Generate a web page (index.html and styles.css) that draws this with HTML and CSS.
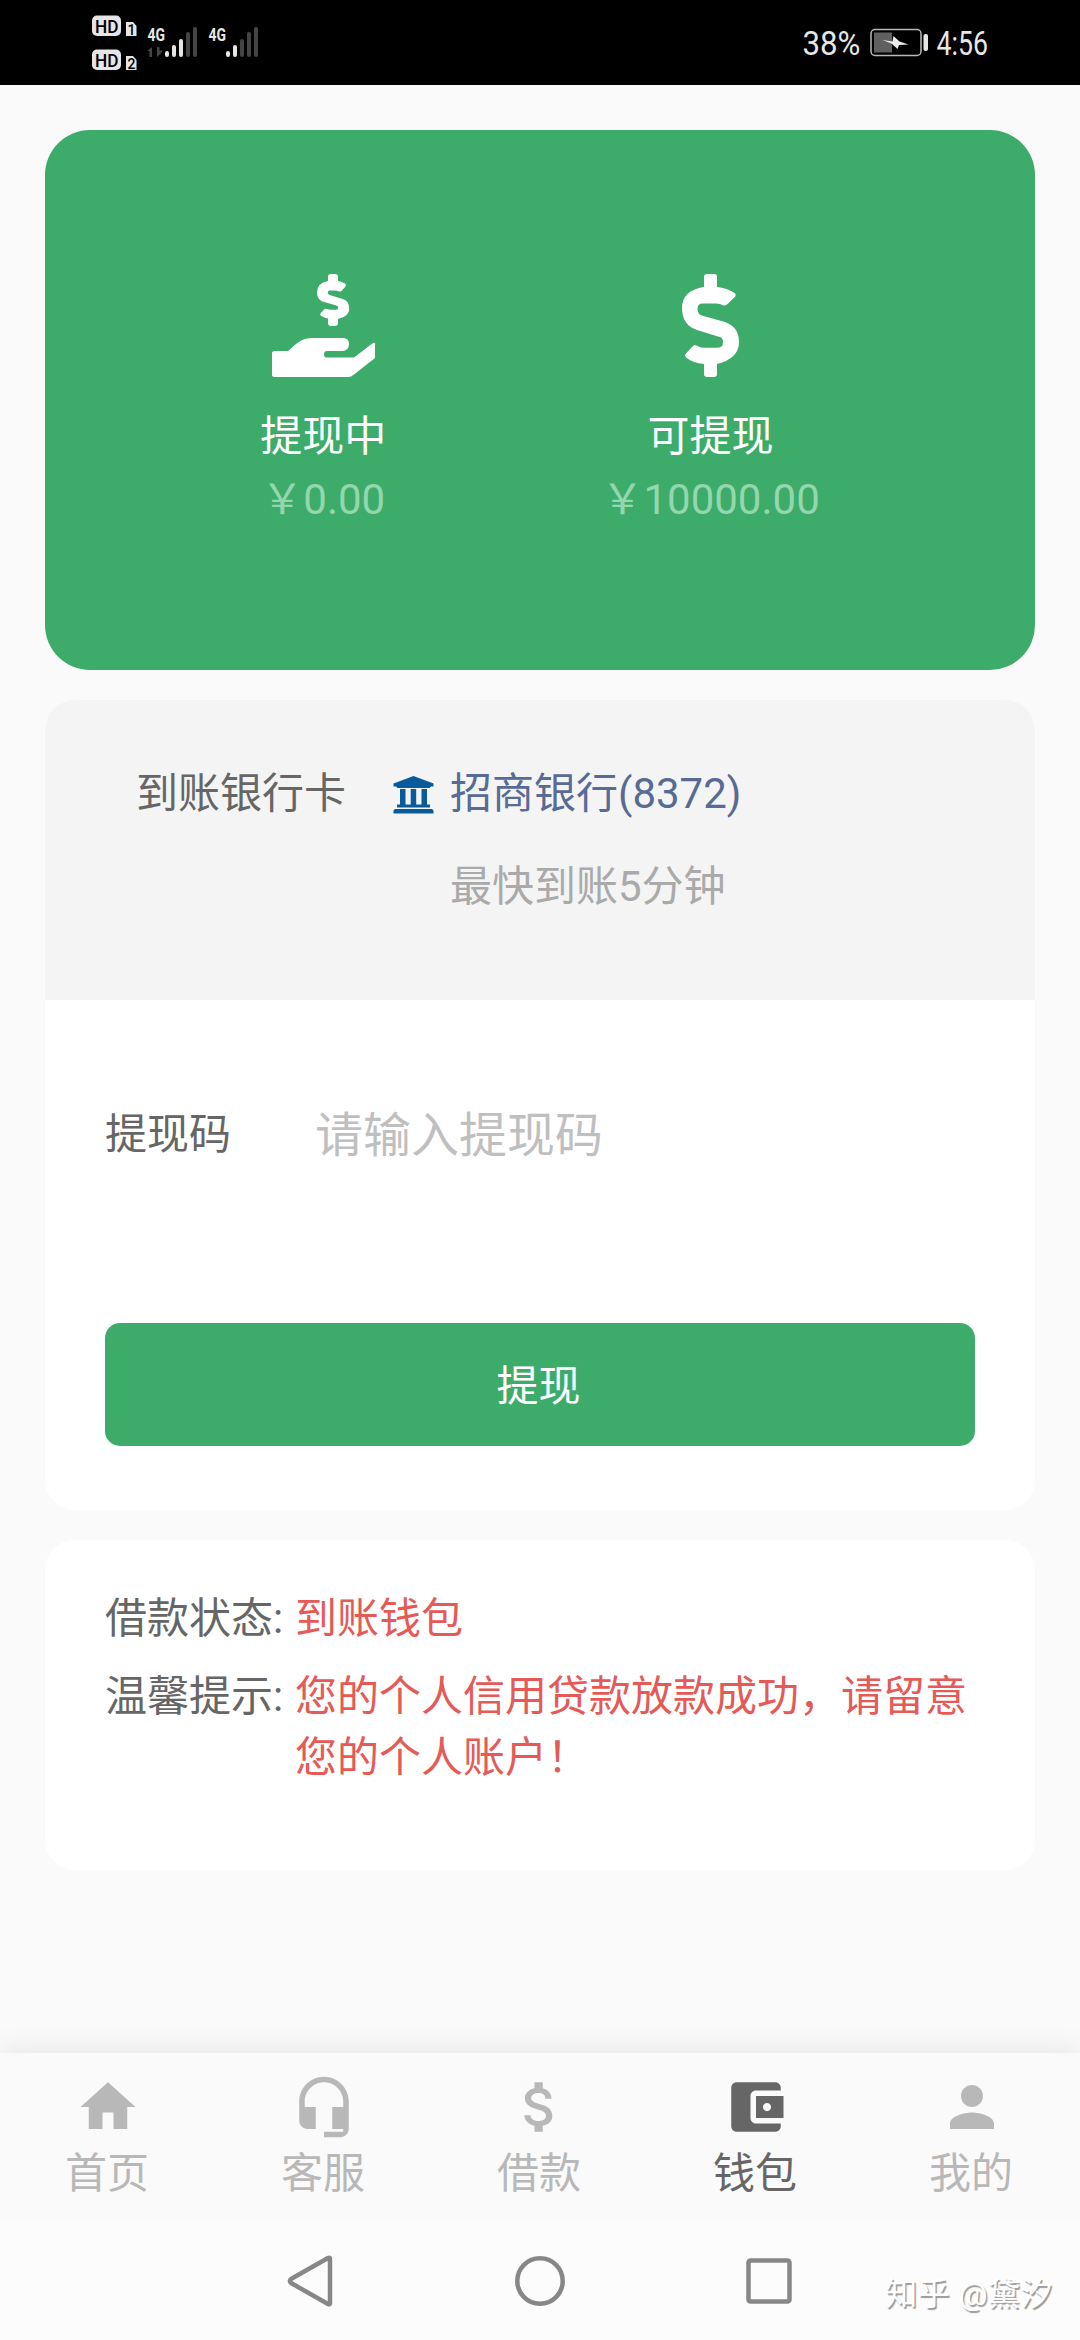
FILE: index.html
```html
<!DOCTYPE html>
<html lang="zh-CN">
<head>
<meta charset="utf-8">
<title>钱包</title>
<link rel="stylesheet" href="styles.css">
</head>
<body>
<header class="status">
  <svg class="status-left" width="180" height="85" viewBox="80 0 180 85">
    <g fill="#e6e6e6">
      <rect x="92" y="15.500" width="29" height="20.500" rx="5"/>
      <rect x="92" y="49.500" width="29" height="20.500" rx="5"/>
      <path d="M126 22h7l3.500 4v10H126zM126 56h7l3.500 4v10H126z"/>
    </g>
    <g class="badge-text">
      <text x="95" y="32.500" font-size="19" textLength="23.500" lengthAdjust="spacingAndGlyphs">HD</text>
      <text x="95" y="66.500" font-size="19" textLength="23.500" lengthAdjust="spacingAndGlyphs">HD</text>
      <text x="127.500" y="34.500" font-size="14" textLength="7">1</text>
      <text x="127.500" y="68.500" font-size="14" textLength="7">2</text>
    </g>
    <g class="net-text">
      <text x="147.500" y="40.500" font-size="19" textLength="17.500" lengthAdjust="spacingAndGlyphs">4G</text>
      <text x="208.500" y="40.500" font-size="19" textLength="17.500" lengthAdjust="spacingAndGlyphs">4G</text>
    </g>
    <g stroke-width="4" stroke-linecap="round">
      <g stroke="#e6e6e6"><path d="M167 53v2M174 47v8M181 41v14M228 53v2M235 47v8"/></g>
      <g stroke="#444"><path d="M188 34v21M195 29v26M242 41v14M249 34v21M256 29v26"/></g>
    </g>
    <path d="M152 47v10h-2.500v-6H147zM157 47v10l5-5v-2l-2.500 1v-4z" fill="#444"/>
  </svg>
  <svg class="status-right" width="240" height="85" viewBox="800 0 240 85">
    <text class="clock" x="802.500" y="55" font-size="34" textLength="58" lengthAdjust="spacingAndGlyphs">38%</text>
    <rect x="871" y="29.500" width="50" height="26" rx="4" fill="none" stroke="#b9b9b9" stroke-width="1.500"/>
    <rect x="874" y="32.500" width="18" height="20" fill="#606060"/>
    <rect x="923.500" y="34" width="4.500" height="17" rx="2" fill="#e6e6e6"/>
    <path d="M882.500 40l10 1.500 1-5.500 6 5.500 9 3-9.500.5-1.500 4-6-5.500z" fill="#eee"/>
    <text class="clock" x="936.500" y="55" font-size="34" textLength="51.500" lengthAdjust="spacingAndGlyphs">4:56</text>
  </svg>
</header>

<main class="page">
  <section class="hero">
    <div class="stat">
      <svg class="stat-icon" viewBox="0 0 103 103" fill="currentColor">
        <path d="M56 2.500Q56 0 59 0h4q3 0 3 2.500V7q4 .6 7 2.600 1.500 1 .7 2.600l-4 4.500q-1.200 1.300-3 .6-1.600-.8-4-.8h-5q-2 0-2 2.200 0 1.500 2 2.200l13 4Q77.300 26.500 77.300 35q0 7.500-11.300 10V49q0 3-3 3h-4q-3 0-3-3v-4.500q-4-.6-7-2.800-1.500-1-.5-2.500l3.500-3.700q1.300-1.200 3-.4 1.500.6 4 .6h5q2.200 0 2.200-2 0-1.700-2-2.300l-11-3.200Q45 27 45 18.500 45 9 56 7z"/>
        <path d="M2.500 77H16L24 70Q31 64 39 64H71Q77 64 77 70T71 77H55Q52 77 52 80.300T55 83.500H82L99 70.500Q103 67.500 103 70V84L82 100.500Q79 103 76 103H2.500Q0 103 0 100.500V79.500Q0 77 2.500 77z"/>
      </svg>
      <span class="stat-label">提现中</span>
      <span class="stat-amount">￥0.00</span>
    </div>
    <div class="stat">
      <svg class="stat-icon" viewBox="0 0 103 103" fill="currentColor">
        <path d="M45 3q0-3 3-3h7q3 0 3 3V13q10 1 17.500 6 2 1.500.6 3.800L68 30.500q-2 1.800-4 .7-3-1.700-7-1.700H43.500Q38.500 29.500 38.500 35t5 6.800L66 48Q80 53 80 68 80 84.500 58 90v10q0 3-3 3h-7q-3 0-3-3V90Q34 89 27 83.500q-1.800-1.500-.5-3.400l7.500-8.200q1.700-1.700 4-.2 3 2.100 6.500 2.100H58Q64 73.800 64 68.300T59 62.500L38 56Q23 51 23 34 23 16.500 45 13z"/>
      </svg>
      <span class="stat-label">可提现</span>
      <span class="stat-amount">￥10000.00</span>
    </div>
  </section>

  <section class="card withdraw">
    <div class="bank">
      <span class="bank-label">到账银行卡</span>
      <svg class="bank-icon" viewBox="0 0 41 38" fill="currentColor">
        <path d="M20.500 0L40.500 7.500v3H38L36.500 12h-32L3 10.500H.5v-3zM7 13h5.500v16H7zM17.700 13h5.500v16h-5.500zM28.500 13H34v16h-5.500zM4 28.500h33v3H4zM2 33h37l1.500 1.500V37.500H.5V34.500z"/>
      </svg>
      <div class="bank-info">
        <span class="bank-name">招商银行(8372)</span>
        <span class="bank-hint">最快到账5分钟</span>
      </div>
    </div>
    <div class="code-row">
      <label class="code-label" for="code">提现码</label>
      <input class="code-input" id="code" type="text" placeholder="请输入提现码">
    </div>
    <button class="submit" type="button">提现</button>
  </section>

  <section class="card notice">
    <div class="notice-row">
      <span class="notice-key">借款状态:</span>
      <span class="notice-value">到账钱包</span>
    </div>
    <div class="notice-row">
      <span class="notice-key">温馨提示:</span>
      <span class="notice-value">您的个人信用贷款放款成功，请留意您的个人账户！</span>
    </div>
  </section>
</main>

<nav class="tabs">
  <a class="tab">
    <svg class="tab-icon" viewBox="0 0 24 24"><path d="M10 20v-6h4v6h5v-8h3L12 3 2 12h3v8z"/></svg>
    <span>首页</span>
  </a>
  <a class="tab">
    <svg class="tab-icon" viewBox="0 0 24 24"><path d="M12 1c-4.970 0-9 4.030-9 9v7c0 1.660 1.340 3 3 3h3v-8H5v-2c0-3.870 3.130-7 7-7s7 3.130 7 7v2h-4v8h4v1h-7v2h6c1.660 0 3-1.340 3-3V10c0-4.970-4.030-9-9-9z"/></svg>
    <span>客服</span>
  </a>
  <a class="tab">
    <svg class="tab-icon" viewBox="0 0 24 24"><path d="M11.800 10.900c-2.270-.59-3-1.200-3-2.150 0-1.090 1.010-1.850 2.700-1.850 1.780 0 2.440.85 2.500 2.100h2.210c-.07-1.720-1.120-3.300-3.210-3.810V3h-3v2.160c-1.940.42-3.500 1.680-3.500 3.610 0 2.310 1.910 3.460 4.700 4.130 2.500.6 3 1.480 3 2.410 0 .69-.49 1.790-2.700 1.790-2.060 0-2.870-.92-2.980-2.100h-2.200c.12 2.190 1.760 3.420 3.680 3.830V21h3v-2.150c1.950-.37 3.500-1.500 3.500-3.550 0-2.840-2.430-3.810-4.700-4.400z"/></svg>
    <span>借款</span>
  </a>
  <a class="tab tab-active">
    <svg class="tab-icon" viewBox="0 0 24 24"><path d="M21 18v1c0 1.100-.9 2-2 2H5c-1.110 0-2-.9-2-2V5c0-1.100.89-2 2-2h14c1.100 0 2 .9 2 2v1h-9c-1.110 0-2 .9-2 2v8c0 1.100.89 2 2 2h9zm-9-2h10V8H12v8zm4-2.500c-.83 0-1.500-.67-1.500-1.500s.67-1.500 1.500-1.500 1.500.67 1.500 1.500-.67 1.500-1.500 1.500z"/></svg>
    <span>钱包</span>
  </a>
  <a class="tab">
    <svg class="tab-icon" viewBox="0 0 24 24"><path d="M12 12c2.210 0 4-1.790 4-4s-1.790-4-4-4-4 1.790-4 4 1.790 4 4 4zm0 2c-2.670 0-8 1.340-8 4v2h16v-2c0-2.660-5.330-4-8-4z"/></svg>
    <span>我的</span>
  </a>
</nav>

<footer class="system">
  <svg class="system-icon" viewBox="0 0 60 60"><path d="M49 8v44q0 2-2 1L10 32q-2-2 0-4L47 7q2-1 2 1z"/></svg>
  <svg class="system-icon" viewBox="0 0 60 60"><circle cx="30" cy="30" r="22.700"/></svg>
  <svg class="system-icon" viewBox="0 0 60 60"><rect x="9.500" y="9.500" width="41" height="41" rx="2"/></svg>
  <span class="watermark">知乎 @黛汐</span>
</footer>
</body>
</html>
```

FILE: styles.css
```css
* {
  box-sizing: border-box;
}

body {
  margin: 0;
  width: 1080px;
  height: 2340px;
  display: flex;
  flex-direction: column;
  overflow: hidden;
  background: #fafafa;
  color: #666;
  font-family: Roboto, "Noto Sans CJK SC", sans-serif;
  font-size: 42px;
  line-height: 60px;
}

svg {
  display: block;
  flex: none;
}

/* Status bar */
.status {
  flex: none;
  height: 85px;
  display: flex;
  justify-content: space-between;
  padding: 0 40px 0 80px;
  background: #000;
}

.badge-text {
  fill: #000;
  font-weight: 500;
}

.net-text {
  fill: #e6e6e6;
  font-weight: 700;
}

.clock {
  fill: #e6e6e6;
}

/* Content */
.page {
  flex: 1;
  display: flex;
  flex-direction: column;
  padding: 45px 45px 0;
}

.hero {
  height: 540px;
  display: flex;
  justify-content: space-evenly;
  padding-top: 144px;
  border-radius: 45px;
  background: #3dac6a;
  color: #fff;
}

.stat {
  display: flex;
  flex-direction: column;
  align-items: center;
}

.stat-icon {
  width: 103px;
  height: 103px;
  margin-bottom: 30px;
}

.stat-label {
  height: 63px;
}

.stat-amount {
  color: #94d6ad;
}

.card {
  margin-top: 30px;
  border-radius: 30px;
  background: #fff;
  overflow: hidden;
}

.withdraw {
  height: 810px;
  display: flex;
  flex-direction: column;
}

.bank {
  height: 300px;
  display: flex;
  align-items: flex-start;
  padding: 64px 0 0 91px;
  background: #f4f4f4;
}

.bank-label {
  width: 257px;
}

.bank-icon {
  width: 41px;
  height: 38px;
  margin: 12px 16px 0 0;
  color: #075a9c;
}

.bank-info {
  display: flex;
  flex-direction: column;
  gap: 33px;
}

.bank-name {
  color: #576b95;
}

.bank-hint {
  color: #aaa;
}

.code-row {
  display: flex;
  align-items: center;
  height: 72px;
  margin: 99px 60px 152px;
}

.code-label {
  width: 210px;
}

.code-input {
  flex: 1;
  height: 72px;
  padding: 0;
  border: 0;
  outline: 0;
  background: none;
  font: inherit;
  font-size: 48px;
}

.code-input::placeholder {
  color: #bfbfbf;
  opacity: 1;
}

.submit {
  height: 123px;
  margin: 0 60px;
  padding: 4px 3px 0 0;
  border: 0;
  border-radius: 15px;
  background: #3dac6a;
  color: #fff;
  font: inherit;
}

.notice {
  height: 330px;
  display: flex;
  flex-direction: column;
  gap: 17px;
  padding: 48px 60px 0;
}

.notice-row {
  display: flex;
  line-height: 61px;
}

.notice-key {
  width: 190px;
}

.notice-value {
  flex: 1;
  color: #e55a56;
}

/* Tab bar */
.tabs {
  flex: none;
  height: 168px;
  display: flex;
  padding-top: 21px;
  background: #fafafa;
  box-shadow: 0 0 30px rgba(0, 0, 0, 0.1);
}

.tab {
  flex: 1;
  display: flex;
  flex-direction: column;
  align-items: center;
  gap: 4px;
  color: #b8b8b8;
}

.tab span {
  padding-right: 2px;
}

.tab-active {
  color: #666;
}

.tab-icon {
  width: 66px;
  height: 66px;
  fill: currentColor;
}

/* System navigation */
.system {
  position: relative;
  flex: none;
  height: 119px;
  display: flex;
  justify-content: center;
  gap: 169px;
  padding-top: 30px;
  background: #fcfcfc;
}

.system-icon {
  width: 60px;
  height: 60px;
  fill: none;
  stroke: #878787;
  stroke-width: 4.5;
  stroke-linejoin: round;
}

.watermark {
  position: absolute;
  right: 27px;
  bottom: 26px;
  color: #fff;
  font-size: 32px;
  line-height: 40px;
  letter-spacing: 0.5px;
  text-shadow: 1.5px 1.5px 1px #999;
}
```
